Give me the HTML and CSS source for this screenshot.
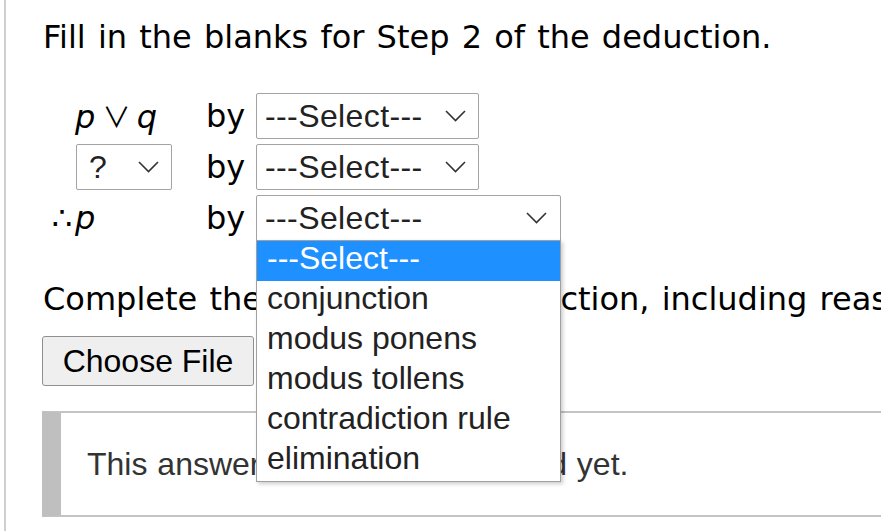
FILE: index.html
```html
<!DOCTYPE html>
<html lang="en">
<head>
    <meta charset="UTF-8">
    <meta name="viewport" content="width=device-width, initial-scale=1.0">
    <title>Deduction</title>
    <link rel="stylesheet" href="styles.css">
</head>
<body>
    <div class="page">
        <p class="question">Fill in the blanks for Step 2 of the deduction.</p>

        <div class="deduction">
            <span class="therefore"></span>
            <span class="formula"><i>p</i> <span class="or">∨</span> <i>q</i></span>
            <span class="by">by</span>
            <div class="select">
                <span>---Select---</span>
                <svg class="chevron" width="21" height="12" viewBox="0 0 21 12"><polyline points="1,1 10.5,10.5 20,1" fill="none" stroke="#333" stroke-width="1.6"/></svg>
            </div>

            <span class="therefore"></span>
            <span class="formula">
                <div class="select small">
                    <span>?</span>
                    <svg class="chevron" width="21" height="12" viewBox="0 0 21 12"><polyline points="1,1 10.5,10.5 20,1" fill="none" stroke="#333" stroke-width="1.6"/></svg>
                </div>
            </span>
            <span class="by">by</span>
            <div class="select">
                <span>---Select---</span>
                <svg class="chevron" width="21" height="12" viewBox="0 0 21 12"><polyline points="1,1 10.5,10.5 20,1" fill="none" stroke="#333" stroke-width="1.6"/></svg>
            </div>

            <span class="therefore">∴</span>
            <span class="formula"><i>p</i></span>
            <span class="by">by</span>
            <div class="select wide open">
                <span>---Select---</span>
                <svg class="chevron" width="21" height="12" viewBox="0 0 21 12"><polyline points="1,1 10.5,10.5 20,1" fill="none" stroke="#333" stroke-width="1.6"/></svg>
                <ul class="options">
                    <li class="active">---Select---</li>
                    <li>conjunction</li>
                    <li>modus ponens</li>
                    <li>modus tollens</li>
                    <li>contradiction rule</li>
                    <li>elimination</li>
                </ul>
            </div>
        </div>

        <p class="question complete">Complete the steps of the deduction, including reasons for each step.</p>

        <button class="file-button">Choose File</button>

        <div class="answer">
            <div class="answer-body">This answer has not been graded yet.</div>
        </div>
    </div>
</body>
</html>
```

FILE: styles.css
```css
html, body {
    margin: 0;
    padding: 0;
    overflow: hidden;
    background: #fff;
}

.page {
    margin-left: 4px;
    border-left: 2px solid #cfcfcf;
    padding-left: 37px;
    min-height: 531px;
    font-family: "DejaVu Sans", Verdana, sans-serif;
    font-size: 32px;
    word-spacing: 2px;
    color: #000;
}

.question {
    margin: 0;
    padding-top: 18px;
    white-space: nowrap;
}

.complete {
    padding-top: 0;
    margin-top: 39px;
}

.deduction {
    display: grid;
    grid-template-columns: 32px 131px 50px auto;
    grid-auto-rows: 46px;
    row-gap: 5px;
    align-items: center;
    margin-top: 37px;
    word-spacing: 0;
}

.therefore {
    text-align: center;
    padding-left: 6px;
}

.formula i {
    font-style: italic;
}

.formula .or {
    font-family: "Noto Sans CJK JP", "DejaVu Sans", sans-serif;
    font-size: 28px;
    margin: 0 -4px 0 -3px;
}

.formula .select {
    margin-left: 1px;
}

.select {
    position: relative;
    box-sizing: border-box;
    width: 223px;
    height: 46px;
    border: 1px solid #a3a3a3;
    border-radius: 2px;
    display: flex;
    align-items: center;
    justify-content: space-between;
    padding: 0 12px 0 8px;
    font-family: "Liberation Sans", Arial, sans-serif;
    font-size: 32px;
    color: #222;
    background: #fff;
}

.select > span {
    letter-spacing: 0.4px;
}

.select.small {
    width: 96px;
    padding-left: 12px;
}

.select.wide {
    width: 305px;
    padding-right: 13px;
}

.select.open {
    border-radius: 2px 2px 0 0;
}

.options {
    position: absolute;
    top: 44px;
    left: -1px;
    width: 303px;
    margin: 0;
    padding: 0;
    list-style: none;
    background: #fff;
    border: 1px solid #a0a0a0;
    box-shadow: 2px 2px 4px rgba(0, 0, 0, 0.2);
    z-index: 5;
}

.options li {
    height: 40px;
    line-height: 34px;
    padding-left: 10px;
    color: #222;
    white-space: nowrap;
}

.options li.active {
    background: #1e90ff;
    color: #fff;
}

.file-button {
    display: block;
    box-sizing: border-box;
    width: 212px;
    height: 50px;
    margin: 18px 0 0 -1px;
    padding: 0;
    border: 1px solid #8f8f8f;
    border-radius: 3px;
    background: #efefef;
    font-family: "Liberation Sans", Arial, sans-serif;
    font-size: 32px;
    color: #000;
}

.answer {
    width: 1000px;
    margin-top: 25px;
    margin-left: -1px;
    border-top: 2px solid #c4c4c4;
    border-bottom: 2px solid #c4c4c4;
    border-left: 19px solid #bfbfbf;
}

.answer-body {
    padding: 33px 0 32px 26px;
    font-family: "Liberation Sans", Arial, sans-serif;
    font-size: 32px;
    word-spacing: 1px;
    color: #333;
}
```
